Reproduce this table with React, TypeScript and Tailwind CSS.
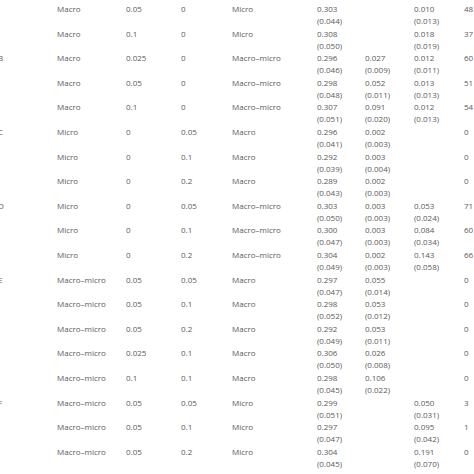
import React from 'react';

type Row = {
  label: string;
  model: string;
  a: string;
  b: string;
  fit: string;
  c: [string, string];
  d: [string, string] | null;
  e: [string, string] | null;
  n: string;
};

const rows: Row[] = [
  { label: '', model: 'Macro', a: '0.05', b: '0', fit: 'Micro', c: ['0.303', '(0.044)'], d: null, e: ['0.010', '(0.013)'], n: '48' },
  { label: '', model: 'Macro', a: '0.1', b: '0', fit: 'Micro', c: ['0.308', '(0.050)'], d: null, e: ['0.018', '(0.019)'], n: '37' },
  { label: 'B', model: 'Macro', a: '0.025', b: '0', fit: 'Macro–micro', c: ['0.296', '(0.046)'], d: ['0.027', '(0.009)'], e: ['0.012', '(0.011)'], n: '60' },
  { label: '', model: 'Macro', a: '0.05', b: '0', fit: 'Macro–micro', c: ['0.298', '(0.048)'], d: ['0.052', '(0.011)'], e: ['0.013', '(0.013)'], n: '51' },
  { label: '', model: 'Macro', a: '0.1', b: '0', fit: 'Macro–micro', c: ['0.307', '(0.051)'], d: ['0.091', '(0.020)'], e: ['0.012', '(0.013)'], n: '54' },
  { label: 'C', model: 'Micro', a: '0', b: '0.05', fit: 'Macro', c: ['0.296', '(0.041)'], d: ['0.002', '(0.003)'], e: null, n: '0' },
  { label: '', model: 'Micro', a: '0', b: '0.1', fit: 'Macro', c: ['0.292', '(0.039)'], d: ['0.003', '(0.004)'], e: null, n: '0' },
  { label: '', model: 'Micro', a: '0', b: '0.2', fit: 'Macro', c: ['0.289', '(0.043)'], d: ['0.002', '(0.003)'], e: null, n: '0' },
  { label: 'D', model: 'Micro', a: '0', b: '0.05', fit: 'Macro–micro', c: ['0.303', '(0.050)'], d: ['0.003', '(0.003)'], e: ['0.053', '(0.024)'], n: '71' },
  { label: '', model: 'Micro', a: '0', b: '0.1', fit: 'Macro–micro', c: ['0.300', '(0.047)'], d: ['0.003', '(0.003)'], e: ['0.084', '(0.034)'], n: '60' },
  { label: '', model: 'Micro', a: '0', b: '0.2', fit: 'Macro–micro', c: ['0.304', '(0.049)'], d: ['0.002', '(0.003)'], e: ['0.143', '(0.058)'], n: '66' },
  { label: 'E', model: 'Macro–micro', a: '0.05', b: '0.05', fit: 'Macro', c: ['0.297', '(0.047)'], d: ['0.055', '(0.014)'], e: null, n: '0' },
  { label: '', model: 'Macro–micro', a: '0.05', b: '0.1', fit: 'Macro', c: ['0.298', '(0.052)'], d: ['0.053', '(0.012)'], e: null, n: '0' },
  { label: '', model: 'Macro–micro', a: '0.05', b: '0.2', fit: 'Macro', c: ['0.292', '(0.049)'], d: ['0.053', '(0.011)'], e: null, n: '0' },
  { label: '', model: 'Macro–micro', a: '0.025', b: '0.1', fit: 'Macro', c: ['0.306', '(0.050)'], d: ['0.026', '(0.008)'], e: null, n: '0' },
  { label: '', model: 'Macro–micro', a: '0.1', b: '0.1', fit: 'Macro', c: ['0.298', '(0.045)'], d: ['0.106', '(0.022)'], e: null, n: '0' },
  { label: 'F', model: 'Macro–micro', a: '0.05', b: '0.05', fit: 'Micro', c: ['0.299', '(0.051)'], d: null, e: ['0.050', '(0.031)'], n: '3' },
  { label: '', model: 'Macro–micro', a: '0.05', b: '0.1', fit: 'Micro', c: ['0.297', '(0.047)'], d: null, e: ['0.095', '(0.042)'], n: '1' },
  { label: '', model: 'Macro–micro', a: '0.05', b: '0.2', fit: 'Micro', c: ['0.304', '(0.045)'], d: null, e: ['0.191', '(0.070)'], n: '0' },
];

const Cell: React.FC<{ v: [string, string] | null }> = ({ v }) => (
  <div className="flex flex-col">
    {v && (
      <>
        <span>{v[0]}</span>
        <span>{v[1]}</span>
      </>
    )}
  </div>
);

export default function App() {
  return (
    <div
      className="w-[474px] h-[474px] bg-white overflow-hidden text-[#5a5a5a] text-[8px] leading-[12px]"
      style={{ fontFamily: '"Open Sans", "Noto Sans", sans-serif' }}
    >
      <div className="ml-[-2px] pt-[3px]">
        {rows.map((r, i) => (
          <div
            key={i}
            className="grid grid-cols-[59px_69px_55px_51px_85px_48px_49px_50px_40px] h-[24.6px]"
          >
            <span>{r.label}</span>
            <span>{r.model}</span>
            <span>{r.a}</span>
            <span>{r.b}</span>
            <span>{r.fit}</span>
            <Cell v={r.c} />
            <Cell v={r.d} />
            <Cell v={r.e} />
            <span>{r.n}</span>
          </div>
        ))}
      </div>
    </div>
  );
}
